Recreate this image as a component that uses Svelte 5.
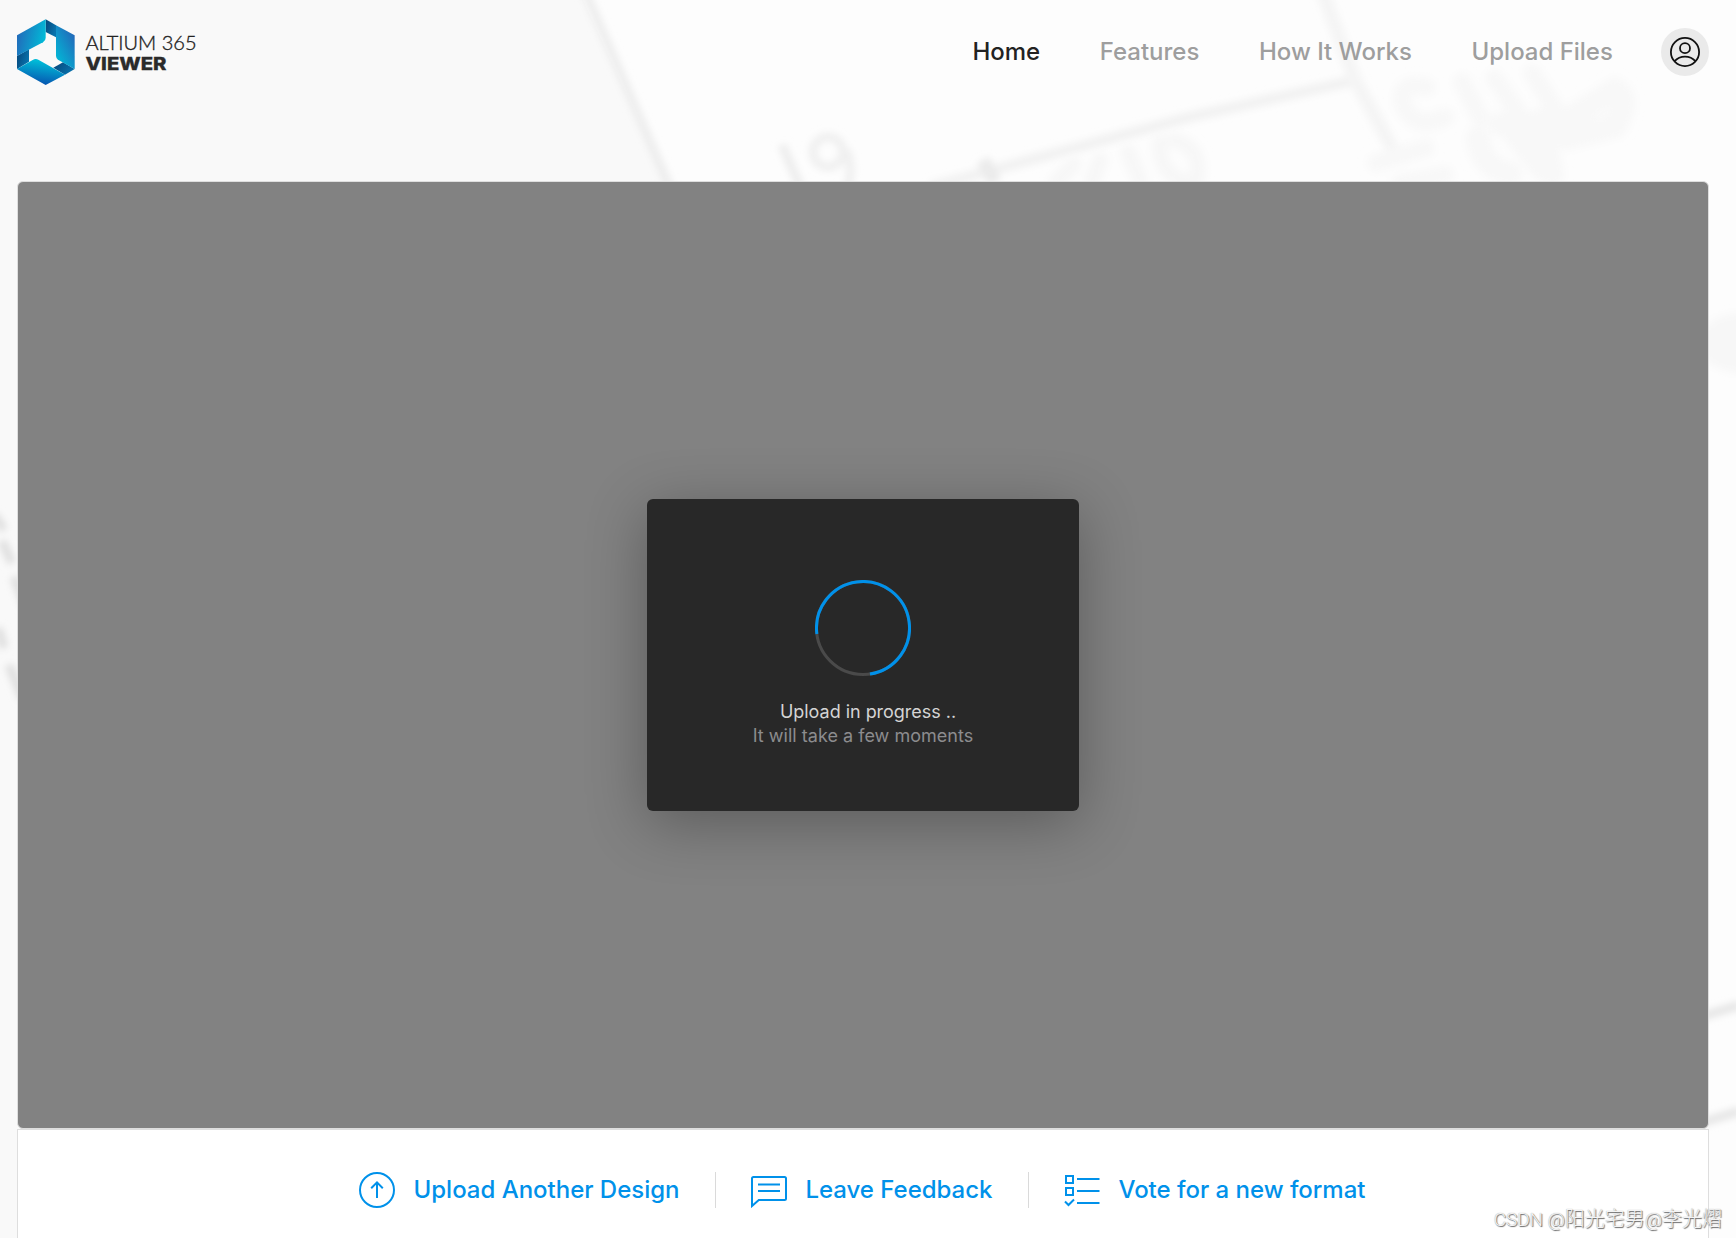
<script lang="ts">
  const links = [
    { label: 'Home', active: true },
    { label: 'Features', active: false },
    { label: 'How It Works', active: false },
    { label: 'Upload Files', active: false },
  ];

  const actions = [
    { label: 'Upload Another Design', icon: 'upload' },
    { label: 'Leave Feedback', icon: 'feedback' },
    { label: 'Vote for a new format', icon: 'vote' },
  ];
</script>

<div class="page">
  <svg class="backdrop" viewBox="0 0 1736 1238" aria-hidden="true">
    <defs>
      <filter id="soft" x="-20%" y="-20%" width="140%" height="140%">
        <feGaussianBlur stdDeviation="3.5" />
      </filter>
      <filter id="softer" x="-20%" y="-20%" width="140%" height="140%">
        <feGaussianBlur stdDeviation="4" />
      </filter>
    </defs>
    <path d="M583 0H1736V1238H1150L667 181z" fill="#fdfdfd" />
    <g fill="none" stroke="#ededed" stroke-width="9" filter="url(#soft)">
      <path d="M580-20L676 202" />
      <path d="M930 187L1190 117L1352 81" stroke="#f2f2f2" stroke-width="11" />
      <path d="M1322-10L1355 80L1396 155" stroke="#f5f5f5" stroke-width="14" />
      <path d="M782 145L806 200" />
      <circle cx="828" cy="152" r="15" stroke="#f0f0f0" />
      <path d="M846 150q8 16 1 40" stroke="#f0f0f0" />
      <path d="M983 160l12 22" stroke="#ebebeb" stroke-width="14" />
      <path d="M-6 515L4 530M2 541l10 22M14 577l12 30M-2 628l6 20M9 665l14 34" stroke="#dfdfdf" />
      <path d="M1700 1017l40-12M1700 1123l40-12" stroke="#e6e6e6" />
    </g>
    <g fill="none" stroke="#f8f8f8" stroke-width="18" stroke-linecap="round" filter="url(#softer)">
      <path d="M1056 182l18-18M1092 182l8-22M1128 152l12 28M1174 140q30 8 22 40M1160 142q-2 36 34 42" stroke="#f7f7f7" stroke-width="16" />
      <path d="M1427 87q-30-6-24 18q12 26 42 12" />
      <path d="M1462 82l18 35M1494 78l24 34M1532 73l22 34" />
      <path d="M1478 138q4 30 32 36M1508 125l35 44M1540 120l12 54M1500 124h55M1560 124l55-34q16 8 0 36l-48 12" stroke-width="24" />
      <path d="M1376 163l50-15M1400 183l45-8" />
    </g>
    <ellipse cx="1742" cy="343" rx="44" ry="30" fill="#f7f7f7" filter="url(#softer)" />
  </svg>

  <header>
    <svg class="logo" viewBox="0 0 200 90" role="img" aria-label="Altium 365 Viewer">
      <defs>
        <linearGradient id="left" x1="0" y1="0.2" x2="1" y2="0.5">
          <stop offset="0" stop-color="#2465b8" />
          <stop offset="1" stop-color="#00bcd8" />
        </linearGradient>
        <linearGradient id="right" x1="1" y1="0" x2="0.2" y2="1">
          <stop offset="0.1" stop-color="#2465b8" />
          <stop offset="1" stop-color="#00bcd8" />
        </linearGradient>
        <linearGradient id="bottom" x1="0.65" y1="0" x2="0.4" y2="1">
          <stop offset="0.1" stop-color="#00bcd8" />
          <stop offset="1" stop-color="#0750ae" />
        </linearGradient>
        <linearGradient id="fold" x1="0" y1="0" x2="1" y2="0.5">
          <stop offset="0" stop-color="#064579" />
          <stop offset="1" stop-color="#0872ac" />
        </linearGradient>
      </defs>
      <g transform="scale(.33333)">
        <path d="M137 58L168 76V112L137 96z" fill="url(#fold)" />
        <path d="M51 168L87 148V185L51 207z" fill="url(#fold)" />
        <path d="M189 187L224 207L195 224L160 203z" fill="url(#fold)" />
        <path d="M137 58V113q0 9-8 14L51 168V106z" fill="url(#left)" />
        <path d="M168 76L224 106V207L174 179q-6-4-6-11z" fill="url(#right)" />
        <path d="M51 207L98 180q8-5 17-1L195 224L137 255z" fill="url(#bottom)" />
      </g>
      <text class="brand" x="85.5" y="50" textLength="111" lengthAdjust="spacingAndGlyphs">ALTIUM 365</text>
      <text class="product" x="85.5" y="69.6" textLength="81" lengthAdjust="spacingAndGlyphs">VIEWER</text>
    </svg>

    <nav>
      {#each links as link}
        <a href="#top" class:active={link.active}>{link.label}</a>
      {/each}
      <button class="account" aria-label="Account">
        <svg viewBox="0 0 30 30">
          <circle cx="15" cy="15" r="14.1" />
          <circle cx="15" cy="11.2" r="5" />
          <path d="M4.6 24.2q4-4.6 10.4-4.6t10.4 4.6" />
        </svg>
      </button>
    </nav>
  </header>

  <main>
    <section class="viewer">
      <div class="dialog">
        <svg class="spinner" viewBox="0 0 96 96">
          <circle cx="48" cy="48" r="46.5" />
          <path d="M1.9 54A46.5 46.5 0 1 1 55 94" />
        </svg>
        <p class="status">Upload in progress ..</p>
        <p class="hint">It will take a few moments</p>
      </div>
    </section>

    <section class="actions">
      {#each actions as action}
        <a href="#top">
          <svg viewBox="0 0 36 36">
            {#if action.icon === 'upload'}
              <circle cx="18" cy="18" r="17" />
              <path d="M18 26V11M12.2 16.2L18 10.4L23.8 16.2" />
            {:else if action.icon === 'feedback'}
              <path d="M1 34V6.5Q1 5 2.5 5H33.5Q35 5 35 6.5V26.5Q35 28 33.5 28H7.8z" />
              <path d="M7 12.5H29M7 19H29" />
            {:else}
              <path d="M2 4H9V11H2zM2 16H9V23H2zM1 29.5L4.5 33L10 27.5" />
              <path d="M13 7H35.5M13 19H35.5M13 31H35.5" />
            {/if}
          </svg>
          <span>{action.label}</span>
        </a>
      {/each}
    </section>
  </main>

  <div class="watermark"><span>CSDN @</span>阳光宅男<span>@</span>李光熠</div>
</div>

<style>
  :global(body) {
    overflow: hidden;
  }

  .page {
    position: relative;
    box-sizing: border-box;
    width: 1736px;
    height: 1238px;
    padding: 0 27px 0 17px;
    overflow: hidden;
    background: #f9f9f9;
    font-family: Inter, "Liberation Sans", sans-serif;
  }

  .backdrop {
    position: absolute;
    top: 0;
    left: 0;
    width: 1736px;
    height: 1238px;
  }

  header {
    position: relative;
    display: flex;
    justify-content: space-between;
    height: 181px;
  }

  .logo {
    width: 200px;
    height: 90px;
    margin-left: -17px;
  }

  .brand {
    font: 300 19.5px Lato, sans-serif;
    fill: #222;
    stroke: #222;
    stroke-width: 0.35;
  }

  .product {
    font: 800 17.5px Inter, sans-serif;
    fill: #2b2b2b;
    stroke: #2b2b2b;
    stroke-width: 0.3;
  }

  nav {
    display: flex;
    align-items: center;
    height: 104px;
  }

  a {
    font-size: 24px;
    font-weight: 500;
    line-height: 36px;
    text-decoration: none;
    white-space: nowrap;
  }

  nav a {
    margin-right: 59.7px;
    letter-spacing: -0.02px;
    color: #9e9e9e;
  }

  nav a.active {
    color: #222;
  }

  .account {
    display: flex;
    align-items: center;
    justify-content: center;
    width: 48px;
    height: 48px;
    margin-left: -11.5px;
    padding: 0;
    border: 0;
    border-radius: 50%;
    background: #eaeaea;
  }

  .account svg {
    width: 30px;
    height: 30px;
    fill: none;
    stroke: #111;
    stroke-width: 1.8;
  }

  main {
    position: relative;
  }

  .viewer {
    display: flex;
    align-items: center;
    justify-content: center;
    box-sizing: border-box;
    height: 948px;
    border: 1px solid #dedede;
    border-radius: 6px;
    background: #828282;
  }

  .dialog {
    display: flex;
    flex-direction: column;
    align-items: center;
    box-sizing: border-box;
    width: 432px;
    height: 312px;
    padding-top: 81px;
    border-radius: 6px;
    background: #282828;
    box-shadow: 0 12px 60px rgba(0, 0, 0, 0.3);
  }

  .spinner {
    width: 96px;
    height: 96px;
    margin-bottom: 24px;
    fill: none;
    stroke: #4a4a4a;
    stroke-width: 3;
  }

  .spinner path {
    stroke: #0091ea;
  }

  p {
    margin: 0;
    font-size: 18px;
    line-height: 24px;
    color: #8c8c8e;
  }

  .status {
    padding-left: 10px;
    letter-spacing: -0.03px;
    color: #d4d4d4;
  }

  .hint {
    letter-spacing: 0.02px;
  }

  .actions {
    display: flex;
    justify-content: center;
    box-sizing: border-box;
    height: 110px;
    padding: 42px 2px 0 0;
    border: 1px solid #dedede;
    border-bottom: 0;
    background: #fff;
  }

  .actions a {
    display: flex;
    gap: 18.5px;
    height: 36px;
    padding: 0 35.5px 0 36px;
    letter-spacing: -0.02px;
    color: #0091ea;
  }

  .actions a + a {
    padding-left: 35px;
    border-left: 1px solid #dadada;
  }

  .actions svg {
    width: 36px;
    height: 36px;
    fill: none;
    stroke: currentColor;
    stroke-width: 2;
  }

  .watermark {
    position: absolute;
    right: 14px;
    bottom: 6px;
    font: 300 20px/24px "Noto Sans CJK SC", sans-serif;
    color: #f4f4f4;
    text-shadow: 1px 1px 1px #666, 0 0 1px #999;
    white-space: nowrap;
  }

  .watermark span {
    font-family: Roboto, sans-serif;
    font-size: 19px;
    letter-spacing: -0.1px;
  }
</style>
